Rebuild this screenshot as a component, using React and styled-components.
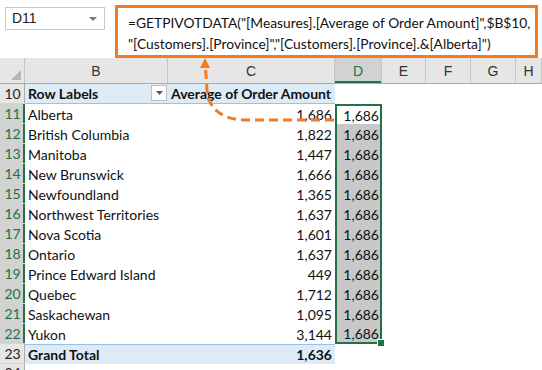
import React from "react";
import styled, { createGlobalStyle } from "styled-components";

const GlobalStyle = createGlobalStyle`
  body {
    margin: 0;
    background: #ffffff;
    font-family: Lato, "Liberation Sans", sans-serif;
  }
`;

const COLS = "25px 143px 167px 47px 44px 45px 45px 26px";
const GREEN = "#217346";
const ORANGE = "#f47b20";

const rows = [
  ["Alberta", "1,686"],
  ["British Columbia", "1,822"],
  ["Manitoba", "1,447"],
  ["New Brunswick", "1,666"],
  ["Newfoundland", "1,365"],
  ["Northwest Territories", "1,637"],
  ["Nova Scotia", "1,601"],
  ["Ontario", "1,637"],
  ["Prince Edward Island", "449"],
  ["Quebec", "1,712"],
  ["Saskachewan", "1,095"],
  ["Yukon", "3,144"],
];

export default function App() {
  return (
    <>
      <GlobalStyle />
      <Page>
        <TopBar>
          <NameBox>
            D11
            <Caret />
          </NameBox>
          <FormulaBox>
            {'=GETPIVOTDATA("[Measures].[Average of Order Amount]",$B$10,\n"[Customers].[Province]","[Customers].[Province].&[Alberta]")'}
          </FormulaBox>
        </TopBar>

        <Sheet>
          <HeaderRow>
            <Corner>
              <svg width="10" height="10" viewBox="0 0 10 10">
                <polygon points="10,0 10,10 0,10" fill="#b7b7b7" />
              </svg>
            </Corner>
            <ColHead>B</ColHead>
            <ColHead>C</ColHead>
            <ColHead $sel>D</ColHead>
            <ColHead>E</ColHead>
            <ColHead>F</ColHead>
            <ColHead>G</ColHead>
            <ColHead>H</ColHead>
          </HeaderRow>

          <Row>
            <RowNum>10</RowNum>
            <PivotHead>
              Row Labels
              <FilterButton>
                <svg width="7" height="4" viewBox="0 0 7 4">
                  <polygon points="0,0 7,0 3.5,4" fill="#555" />
                </svg>
              </FilterButton>
            </PivotHead>
            <PivotHead>Average of Order Amount</PivotHead>
            <Cell />
            <Cell />
            <Cell />
            <Cell />
            <Cell />
          </Row>

          {rows.map(([name, value], i) => (
            <Row key={name}>
              <RowNum $sel>{11 + i}</RowNum>
              <Cell>{name}</Cell>
              <Cell $num>{value}</Cell>
              <SelCell
                $num
                $first={i === 0}
                $last={i === rows.length - 1}
              >
                1,686
                {i === rows.length - 1 && <FillHandle />}
              </SelCell>
              <Cell />
              <Cell />
              <Cell />
              <Cell />
            </Row>
          ))}

          <Row>
            <RowNum>23</RowNum>
            <TotalCell>Grand Total</TotalCell>
            <TotalCell $num>1,636</TotalCell>
            <Cell />
            <Cell />
            <Cell />
            <Cell />
            <Cell />
          </Row>

          <LastRow>
            <RowNum>24</RowNum>
            <Cell />
            <Cell />
            <Cell />
            <Cell />
            <Cell />
            <Cell />
            <Cell />
          </LastRow>
        </Sheet>

        <Arrow width="542" height="370" viewBox="0 0 542 370">
          <path
            d="M 334 120 L 245 120 C 222 120 208 108 207 90 L 205.5 68"
            fill="none"
            stroke={ORANGE}
            strokeWidth="3"
            strokeDasharray="9 5"
          />
          <polygon points="205,58 200,68 210,68" fill={ORANGE} />
        </Arrow>
      </Page>
    </>
  );
}

const Page = styled.div`
  position: relative;
  width: 542px;
  height: 370px;
  overflow: hidden;
  background: #ffffff;
`;

const TopBar = styled.div`
  display: flex;
  align-items: flex-start;
  height: 58px;
  padding-left: 5px;
  box-sizing: border-box;
`;

const NameBox = styled.div`
  position: relative;
  margin-top: 7px;
  width: 100px;
  height: 23px;
  box-sizing: border-box;
  border: 1px solid #c8c8c8;
  padding-left: 6px;
  font-family: "Liberation Sans", Arial, sans-serif;
  font-size: 14px;
  line-height: 21px;
  color: #222;
`;

const Caret = styled.span`
  position: absolute;
  right: 7px;
  top: 9px;
  border-left: 4px solid transparent;
  border-right: 4px solid transparent;
  border-top: 4px solid #777;
`;

const FormulaBox = styled.div`
  margin-left: 10px;
  margin-top: 5px;
  width: 423px;
  height: 53px;
  box-sizing: border-box;
  border: 3px solid ${ORANGE};
  padding: 4px 0 0 10px;
  white-space: pre;
  font-size: 13.8px;
  line-height: 21px;
  color: #111;
`;

const Sheet = styled.div`
  display: flex;
  flex-direction: column;
`;

const Row = styled.div`
  display: grid;
  grid-template-columns: ${COLS};
  height: 20px;
  font-size: 14px;
  color: #111;
`;

const HeaderRow = styled(Row)`
  height: 25px;
  background: #e6e6e6;
  border-bottom: 1px solid #ababab;
`;

const LastRow = styled(Row)`
  align-items: start;
`;

const Corner = styled.div`
  display: flex;
  align-items: flex-end;
  justify-content: flex-end;
  padding: 0 3px 3px 0;
  border-right: 1px solid #c6c6c6;
`;

const ColHead = styled.div`
  display: flex;
  align-items: center;
  justify-content: center;
  font-family: "Liberation Sans", Arial, sans-serif;
  font-size: 14px;
  color: ${(p) => (p.$sel ? GREEN : "#333")};
  background: ${(p) => (p.$sel ? "#d2d2d2" : "transparent")};
  border-right: 1px solid #c6c6c6;
  box-shadow: ${(p) => (p.$sel ? `inset 0 -2px 0 ${GREEN}` : "none")};
`;

const RowNum = styled.div`
  display: flex;
  align-items: center;
  justify-content: center;
  font-size: 14px;
  color: ${(p) => (p.$sel ? GREEN : "#222")};
  background: ${(p) => (p.$sel ? "#d2d2d2" : "#e6e6e6")};
  border-bottom: 1px solid #d4d4d4;
  box-shadow: ${(p) =>
    p.$sel ? `inset -2px 0 0 ${GREEN}` : "inset -1px 0 0 #ababab"};
  box-sizing: border-box;
`;

const Cell = styled.div`
  position: relative;
  display: flex;
  align-items: center;
  justify-content: ${(p) => (p.$num ? "flex-end" : "flex-start")};
  padding: 0 3px;
  white-space: nowrap;
  overflow: visible;
`;

const PivotHead = styled(Cell)`
  background: #ddebf7;
  border-bottom: 1px solid #9bc2e6;
  font-weight: 700;
  box-sizing: border-box;
`;

const FilterButton = styled.span`
  position: absolute;
  right: 1px;
  top: 1px;
  width: 16px;
  height: 16px;
  box-sizing: border-box;
  background: #ffffff;
  border: 1px solid #c0c0c0;
  display: flex;
  align-items: center;
  justify-content: center;
`;

const TotalCell = styled(Cell)`
  background: #ddebf7;
  border-top: 1px solid #9bc2e6;
  font-weight: 700;
  box-sizing: border-box;
`;

const SelCell = styled(Cell)`
  box-sizing: border-box;
  background: ${(p) => (p.$first ? "#ffffff" : "#c8c8c8")};
  border-left: 2px solid ${GREEN};
  border-right: 2px solid ${GREEN};
  border-top: ${(p) => (p.$first ? `2px solid ${GREEN}` : "none")};
  border-bottom: ${(p) => (p.$last ? `2px solid ${GREEN}` : "none")};
  padding-right: 1px;
`;

const FillHandle = styled.span`
  position: absolute;
  right: -5px;
  bottom: -5px;
  width: 6px;
  height: 6px;
  background: ${GREEN};
  border: 1px solid #ffffff;
`;

const Arrow = styled.svg`
  position: absolute;
  left: 0;
  top: 0;
  pointer-events: none;
`;
